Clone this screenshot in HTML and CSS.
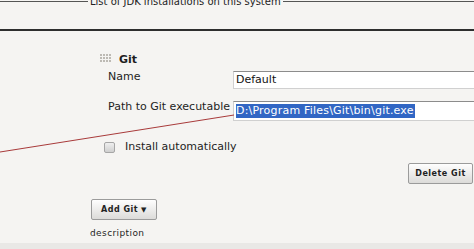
FILE: index.html
```html
<!DOCTYPE html>
<html>
<head>
<meta charset="utf-8">
<link rel="stylesheet" href="styles.css">
</head>
<body>
<div class="page">
  <div class="top">
    <div class="top-caption">List of JDK installations on this system</div>
  </div>
  <div class="section">
    <div class="header">
      <svg class="grip" width="12" height="10" viewBox="0 0 12 10">
        <g fill="#bdbab4">
          <rect x="0" y="0" width="2" height="2"/><rect x="3" y="0" width="2" height="2"/><rect x="6" y="0" width="2" height="2"/><rect x="9" y="0" width="2" height="2"/>
          <rect x="0" y="3" width="2" height="2"/><rect x="3" y="3" width="2" height="2"/><rect x="6" y="3" width="2" height="2"/><rect x="9" y="3" width="2" height="2"/>
          <rect x="0" y="6" width="2" height="2"/><rect x="3" y="6" width="2" height="2"/><rect x="6" y="6" width="2" height="2"/><rect x="9" y="6" width="2" height="2"/>
        </g>
      </svg>
      <span class="title">Git</span>
    </div>
    <div class="fields">
      <div class="label">Name</div>
      <div class="input">Default</div>
      <div class="label">Path to Git executable</div>
      <div class="input input-path"><span class="selected">D:\Program Files\Git\bin\git.exe</span></div>
    </div>
    <div class="check-row">
      <span class="checkbox"></span>
      <span class="check-label">Install automatically</span>
    </div>
    <div class="delete-row">
      <span class="button button-delete">Delete Git</span>
    </div>
  </div>
  <div class="add-row">
    <span class="button button-add">Add Git <span class="caret">&#9660;</span></span>
  </div>
  <div class="description">description</div>
  <div class="bottom-band"></div>
  <svg class="arrow-line" width="474" height="249" viewBox="0 0 474 249">
    <line x1="0" y1="152" x2="234" y2="115" stroke="#a83a3a" stroke-width="1"/>
  </svg>
</div>
</body>
</html>
```
FILE: styles.css
```css
html, body {
  margin: 0;
  padding: 0;
  width: 474px;
  height: 249px;
  overflow: hidden;
  background: #f5f4f2;
}

.page {
  position: relative;
  width: 474px;
  height: 249px;
  overflow: hidden;
  font-family: "DejaVu Sans", Verdana, sans-serif;
  font-size: 11px;
  color: #1e1e1e;
}

.top {
  margin-top: 1px;
  height: 27px;
  border-top: 1px solid #555;
  border-bottom: 2px solid #2e2e2e;
}

.top-caption {
  width: max-content;
  margin-top: -6px;
  margin-left: 88px;
  padding: 0 2px;
  background: #f5f4f2;
  font-size: 10px;
  line-height: 12px;
  color: #222;
}

.section {
  padding: 21px 0 0 100px;
}

.header {
  display: flex;
  align-items: center;
  height: 14px;
  gap: 7px;
}

.title {
  font-weight: bold;
  font-size: 11px;
}

.fields {
  display: grid;
  grid-template-columns: 125px 300px;
  row-gap: 12px;
  margin-top: 5px;
  margin-left: 8px;
  align-items: start;
}

.label {
  line-height: 12px;
  white-space: nowrap;
}

.input {
  height: 16px;
  line-height: 16px;
  background: #fff;
  border: 1px solid #d0d0d0;
  border-top-color: #8c8c8c;
  border-right: none;
  padding-left: 2px;
  font-size: 11px;
  color: #111;
  white-space: nowrap;
}

.input-path {
  height: 17px;
  padding-top: 1px;
}

.selected {
  display: inline-block;
  background: #3166c4;
  color: #fff;
  line-height: 14px;
  letter-spacing: 0.2px;
  padding-right: 1px;
}

.check-row {
  display: flex;
  align-items: center;
  gap: 10px;
  margin-top: 20px;
  margin-left: 4px;
}

.checkbox {
  width: 9px;
  height: 9px;
  border: 1px solid #a6a6a6;
  border-radius: 2px;
  background: linear-gradient(#efefef, #cfcfcf);
}

.check-label {
  line-height: 12px;
}

.delete-row {
  display: flex;
  justify-content: flex-end;
  margin-top: 10px;
}

.button {
  box-sizing: border-box;
  display: inline-flex;
  align-items: center;
  justify-content: center;
  height: 21px;
  border: 1px solid #9b9b9b;
  border-radius: 2px;
  background: linear-gradient(#fefefe, #dcdbd9);
  font-weight: bold;
  font-size: 8px;
  letter-spacing: 0.5px;
  color: #222;
  white-space: nowrap;
}

.button-delete {
  width: 65px;
  margin-right: 1px;
}

.button-add {
  width: 66px;
}

.caret {
  font-size: 7px;
  margin-left: 3px;
}

.add-row {
  display: flex;
  padding: 15px 0 0 91px;
}

.description {
  margin: 7px 0 0 90px;
  font-size: 9px;
  letter-spacing: 0.4px;
  line-height: 12px;
}

.bottom-band {
  position: absolute;
  left: 0;
  right: 0;
  bottom: 0;
  height: 6px;
  background: #e9e8e6;
}

.arrow-line {
  position: absolute;
  left: 0;
  top: 0;
}
```
